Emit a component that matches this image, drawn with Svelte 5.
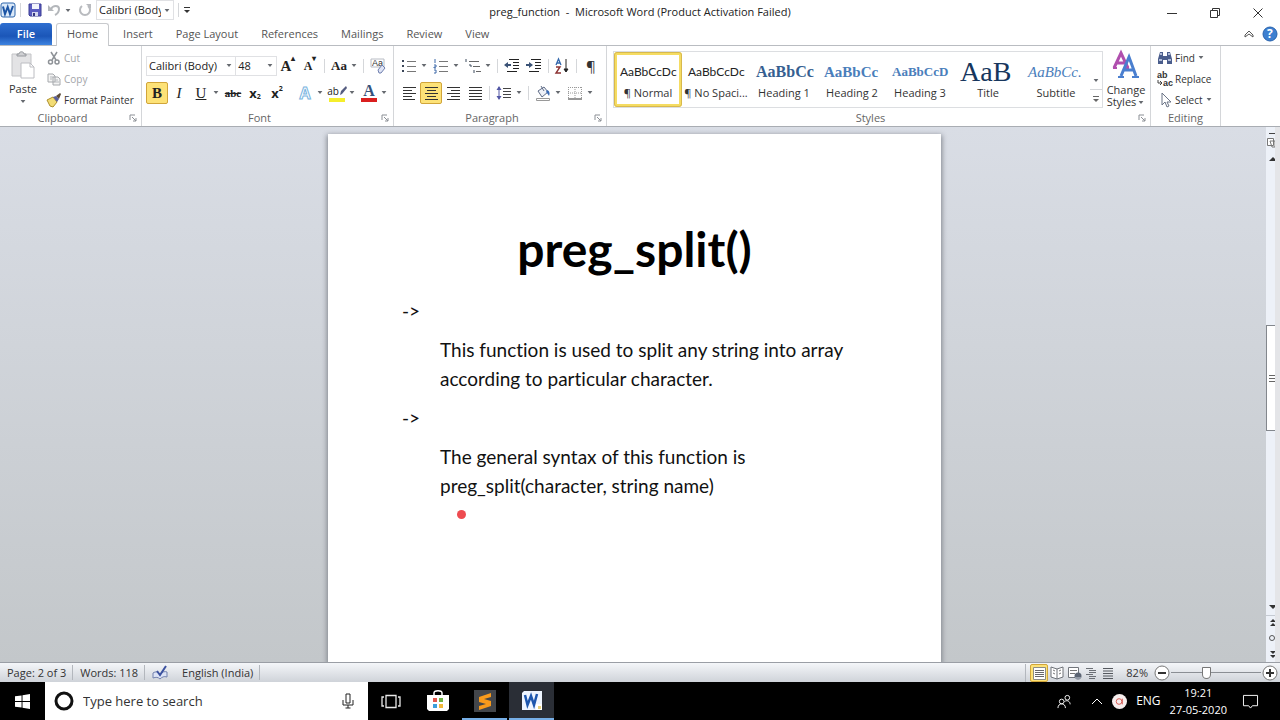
<script>
  const tabs = ['Insert', 'Page Layout', 'References', 'Mailings', 'Review', 'View'];

  const styles = [
    { name: '¶ Normal', sample: 'AaBbCcDc', kind: 'body' },
    { name: '¶ No Spaci...', sample: 'AaBbCcDc', kind: 'body' },
    { name: 'Heading 1', sample: 'AaBbCc', kind: 'h1' },
    { name: 'Heading 2', sample: 'AaBbCc', kind: 'h2' },
    { name: 'Heading 3', sample: 'AaBbCcD', kind: 'h3' },
    { name: 'Title', sample: 'AaB', kind: 'title' },
    { name: 'Subtitle', sample: 'AaBbCc.', kind: 'subtitle' }
  ];

  const icons = {
    // quick access
    word: '<rect x="1" y="1" width="14" height="14" rx="2" fill="#dbe9f8" stroke="#2f66ac"/><path d="M3 4.500l2 7.500 2.700-7 2.300 7 3-8" fill="none" stroke="#1c55a5" stroke-width="2"/>',
    save: '<path d="M2 2h12v12H3l-1-1z" fill="#5a5cc0" stroke="#3b3c94"/><path d="M5 2h7v5H5z" fill="#f2f4fc"/><path d="M5 10h6v4H5z" fill="#d5d8ee"/><path d="M6 11h2v3H6z" fill="#35367f"/>',
    undo: '<path d="M5 7c2-4 8-4 8 0 0 3-2 5-4 6" fill="none" stroke="#b4b7bb" stroke-width="2"/><path d="M2 3v6h6z" fill="#b4b7bb"/>',
    redo: '<path d="M11 4a5 5 0 1 1-6 0" fill="none" stroke="#b9bbbf" stroke-width="2"/><path d="M9 2h5v5z" fill="#b9bbbf"/>',
    // clipboard
    cut: '<path d="M5 2l5 8M11 2L6 10" stroke="#8e9297" stroke-width="1.500"/><circle cx="4.500" cy="12" r="2" fill="none" stroke="#8e9297" stroke-width="1.500"/><circle cx="11" cy="12" r="2" fill="none" stroke="#8e9297" stroke-width="1.500"/>',
    copy: '<path d="M2 3h5l2 2v6H2zM7 6h5l2 2v6H7z" fill="#f4f4f4" stroke="#a5a8ac"/><path d="M4 6h3M4 8h2M9 9h3M9 11h4" stroke="#b5b8bc"/>',
    brush: '<path d="M1 8l6-3 4 5-4 5-3-1z" fill="#f2dc75" stroke="#ae902d"/><path d="M7 5l3-1 3 3-2 3z" fill="#5a5f9c"/><path d="M10 4l4-3 1 1-2 5z" fill="#5d4b38"/>',
    // font
    clear: '<text x="2" y="8" font-size="9" font-family="Liberation Sans" fill="#333">Aa</text><path d="M1 1h13v8H1z" fill="none" stroke="#b8bcc4"/><path d="M8 12l4-5 3 3-4 5H9z" fill="#dfe4f5" stroke="#6f7fae"/>',
    // paragraph
    bullets: '<path d="M1 2h2v2H1zM1 7h2v2H1zM1 12h2v2H1z" fill="#3b4658"/><path d="M6 3.500h9M6 8.500h9M6 13.500h9" stroke="#777"/>',
    numbers: '<path d="M2 1v4M1 7h2v2H1v1h2M1 12h2v3H1" fill="none" stroke="#3d69a8"/><path d="M6 3.500h9M6 8.500h9M6 13.500h9" stroke="#777"/>',
    multi: '<path d="M1 1v3M4 7h2v2M9 12v3" fill="none" stroke="#3d4a5c"/><path d="M4 3.500h10M8 8.500h7M11 13.500h5" stroke="#666"/>',
    outdent: '<path d="M5 1.500h10M9 4.500h6M9 7.500h6M9 10.500h6M3 13.500h10" stroke="#222"/><path d="M0 7l4-3v2h3v2H4v2z" fill="#3a5276"/>',
    indent: '<path d="M5 1.500h10M9 4.500h6M9 7.500h6M9 10.500h6M3 13.500h10" stroke="#222"/><path d="M7 7L3 4v2H0v2h3v2z" fill="#3a5276"/>',
    sort: '<path d="M2 7l2.500-6L7 7M3 5h3" fill="none" stroke="#3368ad" stroke-width="1.300"/><path d="M2 9h4l-4 6h5" fill="none" stroke="#8c3232" stroke-width="1.400"/><path d="M12 1v12M10 11l2 3 2-3z" fill="#222" stroke="#222"/>',
    left: '<path d="M2 2.500h13M2 5.500h9M2 8.500h13M2 11.500h9M2 14.500h12" stroke="#333"/>',
    center: '<path d="M2 2.500h13M4 5.500h9M2 8.500h13M4 11.500h9M2 14.500h13" stroke="#333"/>',
    right: '<path d="M2 2.500h13M6 5.500h9M2 8.500h13M6 11.500h9M2 14.500h13" stroke="#333"/>',
    justify: '<path d="M2 2.500h13M2 5.500h13M2 8.500h13M2 11.500h13M2 14.500h13" stroke="#333"/>',
    spacing: '<path d="M7 3.500h8M7 6.500h8M7 9.500h8M7 12.500h8" stroke="#444"/><path d="M3 2v12" stroke="#5257a5"/><path d="M0.500 5L3 1l2.500 4zM0.500 11L3 15l2.500-4z" fill="#5257a5"/>',
    fill: '<path d="M3 6l6-4 4 5-6 5z" fill="#eef1f8" stroke="#5f6c86"/><path d="M6 1l3 5" stroke="#5f6c86"/><path d="M12 5c3 1 3 4 2 6-1-2-2-3-3-4z" fill="#3a6bb5"/><path d="M1.500 13.500h13v2h-13z" fill="#fff" stroke="#999"/>',
    borders: '<path d="M1.500 2v11M8 2v11M14.500 2v11M1 2.500h14M1 8h14" stroke="#999" stroke-dasharray="1 1"/><path d="M1 14h14" stroke="#333"/>',
    // editing
    find: '<path d="M1 14V9l2-7h3v4h4V2h3l2 7v5h-5v-4H6v4z" fill="#4a5d8c"/><path d="M2 10h3M11 10h3M3 4h2M11 4h2" stroke="#d3dcf0" stroke-width="1.300"/>',
    replace: '<text x="0" y="7" font-size="9" font-weight="bold" font-family="Liberation Sans" fill="#333">ab</text><text x="6" y="15" font-size="9" font-weight="bold" font-family="Liberation Sans" fill="#333">ac</text><path d="M1 9v3h4M3 10l2 2-2 2" fill="none" stroke="#444"/>',
    select: '<path d="M5 1v12l3-3 2 5 2-1-2-4h4z" fill="#fff" stroke="#6b7486"/>',
    // status bar
    proof: '<path d="M1 8c3-2 5-1 7 1 2-2 5-3 7-2v5c-3-1-5 0-7 2-2-2-4-2-7-1z" fill="#dce3f5" stroke="#7281ae"/><path d="M5 6l3 4 6-9" fill="none" stroke="#3c52a0" stroke-width="2"/>',
    print: '<path d="M2.500 2.500h12v12h-12z" fill="#fff" stroke="#8d8d85"/><path d="M4 5.500h9M4 7.500h9M4 9.500h9M4 11.500h9" stroke="#67676b"/>',
    reading: '<path d="M8 4L2 2v10l6 2 6-2V2zM8 4v10" fill="#fff" stroke="#6e7278"/><path d="M4 5l2 1M4 8l2 1M10 6l2-1M10 9l2-1" stroke="#777"/>',
    web: '<path d="M2.500 2.500h10v10h-10z" fill="#fff" stroke="#72767c"/><path d="M4 5.500h7M4 8.500h5" stroke="#777"/><circle cx="12" cy="11" r="3.500" fill="#5c6573"/><path d="M9 13h6" stroke="#c9d0da"/>',
    outline: '<path d="M3 3.500h7M6 5.500h7M6 7.500h7M3 9.500h7M6 11.500h7M6 13.500h6" stroke="#6b6f75"/>',
    draft: '<path d="M3 3.500h10M3 6h10M3 8.500h10M3 11h10M3 13.500h10" stroke="#55595f"/>'
  };
</script>

{#snippet icon(name)}
  <svg class="icon" viewBox="0 0 16 16" aria-hidden="true">{@html icons[name]}</svg>
{/snippet}

{#snippet arrow()}
  <svg class="arrow" viewBox="0 0 10 6" aria-hidden="true"><path d="M2 1h6L5 5z" fill="#666a70" /></svg>
{/snippet}

{#snippet tool(name, split)}
  <button class="tool" class:split aria-label={name}>
    <span class="face">{@render icon(name)}</span>
    {#if split}{@render arrow()}{/if}
  </button>
{/snippet}

{#snippet launcher()}
  <button class="launcher" aria-label="More options">
    <svg viewBox="0 0 8 8"><path d="M1 6V1h5M3 3l4 4M7 4v3H4" fill="none" stroke="#8b8f95" /></svg>
  </button>
{/snippet}

<div class="window">
  <header class="titlebar">
    <div class="quick">
      {@render icon('word')}
      <i class="bar"></i>
      <button class="tool" aria-label="Save">{@render icon('save')}</button>
      <button class="tool split" aria-label="Undo">{@render icon('undo')}{@render arrow()}</button>
      <button class="tool" aria-label="Redo">{@render icon('redo')}</button>
      <span class="combo quickfont">
        <select aria-label="Quick font"><option>Calibri (Body)</option></select>
        {@render arrow()}
      </span>
      <i class="bar"></i>
      <button class="more" aria-label="Customize toolbar">
        <svg viewBox="0 0 8 8"><path d="M1 1.500h6" stroke="#333" /><path d="M1 4h6L4 7z" fill="#333" /></svg>
      </button>
    </div>
    <h1>preg_function&nbsp; -&nbsp; Microsoft Word (Product Activation Failed)</h1>
    <div class="controls">
      <button aria-label="Minimize"><svg viewBox="0 0 10 10"><path d="M0 5.500h10" /></svg></button>
      <button aria-label="Restore"><svg viewBox="0 0 10 10"><path d="M0.500 2.500h7v7h-7zM2.500 2V0.500h7v7H8" /></svg></button>
      <button aria-label="Close"><svg viewBox="0 0 10 10"><path d="M0.500 0.500l9 9M9.500 0.500l-9 9" /></svg></button>
    </div>
  </header>

  <nav class="tabs">
    <button class="file">File</button>
    <button class="tab current">Home</button>
    {#each tabs as tab}
      <button class="tab">{tab}</button>
    {/each}
    <div class="help">
      <button aria-label="Collapse ribbon">
        <svg class="chev" viewBox="0 0 10 10"><path d="M1 6l4-4 4 4v2L5 5 1 8z" fill="#fff" stroke="#555" /></svg>
      </button>
      <button aria-label="Help">
        <svg class="ball" viewBox="0 0 16 16"><circle cx="8" cy="8" r="7" fill="#3d7fd0" stroke="#2862ac" /><text x="5" y="12" font-size="12" font-weight="bold" font-family="Open Sans" fill="#fff">?</text></svg>
      </button>
    </div>
  </nav>

  <div class="ribbon">
    <section class="group clipboard">
      <div class="body">
        <button class="big paste">
          <svg viewBox="0 0 26 28" aria-hidden="true">
            <path d="M2 3h19v22H2z" fill="#e3e3e5" stroke="#c3c4c7" />
            <path d="M7 5V3h2c0-3 5-3 5 0h2v2z" fill="#cfd0d3" stroke="#96999e" />
            <path d="M11 12h9l4 4v11H11z" fill="#fff" stroke="#bcbdc2" />
            <path d="M20 12v4h4" fill="none" stroke="#bcbdc2" />
          </svg>
          <span>Paste</span>
          {@render arrow()}
        </button>
        <div class="stack">
          <button class="line off">{@render icon('cut')}Cut</button>
          <button class="line off">{@render icon('copy')}Copy</button>
          <button class="line">{@render icon('brush')}Format Painter</button>
        </div>
      </div>
      <footer><span>Clipboard</span>{@render launcher()}</footer>
    </section>

    <section class="group font">
      <div class="rows">
        <div class="row">
          <span class="combo family">
            <select aria-label="Font"><option>Calibri (Body)</option></select>
            {@render arrow()}
          </span>
          <span class="combo size">
            <select aria-label="Font size"><option>48</option></select>
            {@render arrow()}
          </span>
          <button class="tool serif" aria-label="Grow font">A<sup>▴</sup></button>
          <button class="tool serif small" aria-label="Shrink font">A<sup>▾</sup></button>
          <i class="bar"></i>
          <button class="tool split serif" aria-label="Change case"><span class="face case">Aa</span>{@render arrow()}</button>
          <i class="bar"></i>
          {@render tool('clear')}
        </div>
        <div class="row">
          <button class="tool serif on"><b>B</b></button>
          <button class="tool serif"><em>I</em></button>
          <button class="tool split serif"><span class="face"><u>U</u></span>{@render arrow()}</button>
          <button class="tool serif strike"><s>abc</s></button>
          <button class="tool script">x<sub>2</sub></button>
          <button class="tool script">x<sup>2</sup></button>
          <i class="bar"></i>
          <button class="tool split"><span class="face glow">A</span>{@render arrow()}</button>
          <button class="tool split"><span class="face ink marker">ab
            <svg viewBox="0 0 8 10"><path d="M1 9l1-4 5-5 1 2-5 6z" fill="#555c80" /></svg></span>{@render arrow()}</button>
          <button class="tool split"><span class="face ink red">A</span>{@render arrow()}</button>
        </div>
      </div>
      <footer><span>Font</span>{@render launcher()}</footer>
    </section>

    <section class="group paragraph">
      <div class="rows">
        <div class="row">
          {@render tool('bullets', true)}
          {@render tool('numbers', true)}
          {@render tool('multi', true)}
          <i class="bar"></i>
          {@render tool('outdent')}
          {@render tool('indent')}
          <i class="bar"></i>
          {@render tool('sort')}
          <i class="bar"></i>
          <button class="tool pilcrow">¶</button>
        </div>
        <div class="row">
          {@render tool('left')}
          <button class="tool on" aria-label="center">{@render icon('center')}</button>
          {@render tool('right')}
          {@render tool('justify')}
          <i class="bar"></i>
          {@render tool('spacing', true)}
          <i class="bar"></i>
          {@render tool('fill', true)}
          {@render tool('borders', true)}
        </div>
      </div>
      <footer><span>Paragraph</span>{@render launcher()}</footer>
    </section>

    <section class="group styles">
      <div class="body">
        <div class="gallery">
          {#each styles as style, i}
            <button class="style" class:chosen={i === 0}>
              <span class="sample {style.kind}">{style.sample}</span>
              <span class="name">{style.name}</span>
            </button>
          {/each}
          <div class="scroll">
            <button aria-label="Next styles">{@render arrow()}</button>
            <button class="last" aria-label="All styles">
              <svg viewBox="0 0 8 8"><path d="M1 1.500h6" stroke="#666" /><path d="M1 4h6L4 7z" fill="#666" /></svg>
            </button>
          </div>
        </div>
        <button class="big change">
          <svg class="letters" viewBox="0 0 28 28" aria-hidden="true">
            <path d="M2 17L9 2l7 15M5 12h8" fill="none" stroke="#b04fae" stroke-width="3" />
            <path d="M1 17h4M13 17h4" stroke="#b04fae" stroke-width="2" />
            <path d="M9 25L17 6l7 19M12 19h10" fill="none" stroke="#4a7fcf" stroke-width="3" />
            <path d="M6 26h6M20 26h7" stroke="#4a7fcf" stroke-width="2" />
          </svg>
          <span>Change</span>
          <span class="second">Styles{@render arrow()}</span>
        </button>
      </div>
      <footer><span>Styles</span>{@render launcher()}</footer>
    </section>

    <section class="group editing">
      <div class="stack">
        <button class="line">{@render icon('find')}Find {@render arrow()}</button>
        <button class="line">{@render icon('replace')}Replace</button>
        <button class="line">{@render icon('select')}Select {@render arrow()}</button>
      </div>
      <footer><span>Editing</span></footer>
    </section>
  </div>

  <main class="workspace">
    <div class="desk">
      <article class="page">
        <h2>preg_split()</h2>
        <p>-&gt;</p>
        <p class="inner">This function is used to split any string into array according to particular character.</p>
        <p>-&gt;</p>
        <p class="inner">The general syntax of this function is preg_split(character, string name)</p>
        <i class="pointer"></i>
      </article>
    </div>
    <div class="scrollbar">
      <svg class="ruler" viewBox="0 0 9 30"><path d="M3 1.500h6" stroke="#444" /><path d="M1.500 6.500h6v7h-6zM4 9h5v6H6z" fill="#fff" stroke="#777" /><path d="M3 29l4-4 4 4z" fill="#333" /></svg>
      <div class="track">
        <div class="thumb"><i></i><i></i><i></i></div>
      </div>
      <svg class="browse" viewBox="0 0 9 60"><path d="M3 3l4 4 4-4z" fill="#333" /><path d="M0 13.500h9" stroke="#c5cad2" /><path d="M4 20l3-3 3 3zM4 24l3-3 3 3z" fill="#333" /><circle cx="6" cy="36" r="2.500" fill="none" stroke="#555" /><path d="M4 49l3 3 3-3zM4 53l3 3 3-3z" fill="#333" /></svg>
    </div>
    <div class="edge"></div>
  </main>

  <footer class="status">
    <span class="cell">Page: 2 of 3</span>
    <span class="cell">Words: 118</span>
    <span class="cell lang">{@render icon('proof')}<span>English (India)</span></span>
    <div class="views">
      <button class="tool on" aria-label="Print layout">{@render icon('print')}</button>
      {#each ['reading', 'web', 'outline', 'draft'] as view}
        <button class="view" aria-label={view}>{@render icon(view)}</button>
      {/each}
      <span class="percent">82%</span>
      <button class="round" aria-label="Zoom out"><svg viewBox="0 0 16 16"><circle cx="8" cy="8" r="7" fill="#fff" stroke="#777" /><path d="M4 8h8" stroke="#333" stroke-width="2" /></svg></button>
      <input type="range" min="10" max="200" value="82" aria-label="Zoom" />
      <button class="round" aria-label="Zoom in"><svg viewBox="0 0 16 16"><circle cx="8" cy="8" r="7" fill="#fff" stroke="#777" /><path d="M4 8h8M8 4v8" stroke="#333" stroke-width="2" /></svg></button>
    </div>
  </footer>

  <div class="taskbar">
    <button class="start" aria-label="Start">
      <svg viewBox="0 0 16 16"><path d="M0 2.500l7-1v6H0zM8 1.300L16 0v7.500H8zM0 8.500h7v6l-7-1zM8 8.500h8V16l-8-1.300z" fill="#fff" /></svg>
    </button>
    <label class="search">
      <svg class="ring" viewBox="0 0 20 20"><circle cx="10" cy="10" r="8" fill="none" stroke="#111" stroke-width="3" /></svg>
      <input type="text" placeholder="Type here to search" aria-label="Search" />
      <svg class="mic" viewBox="0 0 12 16"><path d="M4 1h4v9H4zM1 7v5h10V7M6 12v3M3.500 15h5" fill="none" stroke="#222" /></svg>
    </label>
    <button class="app" aria-label="Task view">
      <svg viewBox="0 0 22 22"><path d="M6 5.500h10v12H6zM4 7H2v9h2M18 7h2v9h-2" fill="none" stroke="#e8e8e8" stroke-width="1.300" /></svg>
    </button>
    <button class="app" aria-label="Store">
      <svg viewBox="0 0 22 22"><path d="M7 6V3c0-3 8-3 8 0v3" fill="none" stroke="#fff" stroke-width="1.500" /><path d="M0 5h22v14l-2 2H2l-2-2z" fill="#fff" /><path d="M6 8h4v4H6z" fill="#e2574c" /><path d="M12 8h4v4h-4z" fill="#6fb344" /><path d="M6 14h4v4H6z" fill="#3ba0dc" /><path d="M12 14h4v4h-4z" fill="#f2b93b" /></svg>
    </button>
    <button class="app running" aria-label="Sublime Text">
      <svg viewBox="0 0 22 22"><path d="M0 0h22v22H0z" fill="#43464b" /><path d="M17 3v4l-7 2 7 2v5L5 20v-4l7-2-7-2V7z" fill="#f89a1c" /></svg>
    </button>
    <button class="app running front" aria-label="Word">
      <svg viewBox="0 0 22 22"><path d="M3 1h18v19H1V3z" fill="#eef5ff" /><path d="M4 5l2.500 10L10 6l3 9 3-11" fill="none" stroke="#1d56ad" stroke-width="2.500" /><path d="M15 14h6v6h-6z" fill="#fff" /><path d="M17 16h3v3h-3z" fill="#e8d27a" /></svg>
    </button>
    <div class="tray">
      <svg class="people" viewBox="0 0 16 16"><circle cx="5" cy="8" r="2.500" /><circle cx="11" cy="4" r="2.500" /><path d="M1 15c0-6 8-6 8 0M8 8c3-2 6 0 6 3" /></svg>
      <svg class="up" viewBox="0 0 12 8"><path d="M1 7l5-5 5 5" /></svg>
      <svg class="dot" viewBox="0 0 16 16"><circle cx="8" cy="8" r="8" fill="#f7eeee" stroke="none" /><circle cx="7.500" cy="8" r="3" stroke="#d4554f" /><path d="M11 5v6" stroke="#d4554f" /></svg>
      <span>ENG</span>
      <time><span>19:21</span><span>27-05-2020</span></time>
      <svg class="note" viewBox="0 0 16 16"><path d="M0.500 1.500h15v11H10L8 15l-2-2.500H0.500z" /></svg>
    </div>
  </div>
</div>

<style>
  :global(body) {
    margin: 0;
  }

  .window {
    display: flex;
    flex-direction: column;
    height: 100vh;
    overflow: hidden;
    background: #fff;
    color: #333;
    font-family: "Open Sans", "Noto Sans", sans-serif;
    font-size: 11px;
    line-height: 14px;
  }

  button,
  select,
  input {
    margin: 0;
    padding: 0;
    border: 0;
    background: none;
    color: inherit;
    font: inherit;
  }

  button {
    display: flex;
    align-items: center;
    justify-content: center;
    flex-shrink: 0;
    white-space: nowrap;
  }

  h1, h2, p {
    margin: 0;
  }

  svg {
    flex-shrink: 0;
    overflow: visible;
  }

  .icon {
    width: 16px;
    height: 16px;
  }

  .arrow {
    width: 8px;
    height: 5px;
  }

  .bar {
    width: 1px;
    height: 14px;
    margin: 0 3px;
    background: #d5d7da;
  }

  /* title bar */
  .titlebar {
    display: grid;
    grid-template-columns: 1fr auto 1fr;
    height: 23px;
  }

  .quick {
    display: flex;
    align-items: center;
    height: 20px;
    gap: 1px;
  }

  .quick .tool {
    width: 20px;
  }

  .quick .split {
    width: 28px;
    gap: 2px;
  }

  .combo {
    display: grid;
    align-items: center;
    height: 20px;
    box-sizing: border-box;
    border: 1px solid #e0e1e4;
  }

  .combo select {
    grid-area: 1 / 1;
    width: 100%;
    padding-left: 2px;
    appearance: none;
    outline: none;
    color: #222;
  }

  .combo .arrow {
    grid-area: 1 / 1;
    justify-self: end;
    margin-right: 2px;
  }

  .quickfont {
    width: 78px;
  }

  .quickfont select {
    width: 64px;
  }

  .more svg,
  .last svg {
    width: 8px;
    height: 8px;
  }

  h1 {
    padding-top: 5px;
    font-size: 11px;
    font-weight: 400;
    color: #222;
  }

  .controls {
    display: flex;
    justify-content: flex-end;
    padding-right: 1px;
  }

  .controls button {
    width: 43px;
    height: 26px;
  }

  .controls svg {
    width: 10px;
    height: 10px;
    fill: none;
    stroke: #333;
  }

  /* tabs */
  .tabs {
    display: flex;
    height: 22px;
    border-bottom: 1px solid #b9bcc1;
    color: #555;
  }

  .file {
    width: 52px;
    margin-right: 4px;
    border-radius: 3px 3px 0 0;
    background: linear-gradient(#2f6fd0, #1b56b8 60%, #3d83e0);
    color: #fff;
    font-weight: 600;
  }

  .tab {
    padding: 0 11px 0 12px;
  }

  .current {
    height: 23px;
    margin-right: 2px;
    padding: 0 10px 2px;
    box-sizing: border-box;
    border: 1px solid #c8cacd;
    border-bottom: 0;
    border-radius: 3px 3px 0 0;
    background: #fff;
  }

  .help {
    display: flex;
    gap: 8px;
    margin-left: auto;
    padding-right: 2px;
  }

  .chev {
    width: 10px;
    height: 10px;
  }

  .ball {
    width: 16px;
    height: 16px;
  }

  /* ribbon */
  .ribbon {
    display: flex;
    height: 80px;
    border-bottom: 1px solid #a9adb3;
  }

  .group {
    display: flex;
    flex-direction: column;
    flex-shrink: 0;
    box-sizing: border-box;
    border-right: 1px solid #d4d6d9;
  }

  .group footer {
    display: flex;
    align-items: center;
    height: 16px;
    margin-top: auto;
    color: #666;
  }

  .group footer span {
    flex: 1;
    text-align: center;
  }

  .launcher {
    width: 16px;
  }

  .launcher svg {
    width: 8px;
    height: 8px;
  }

  .body {
    display: flex;
  }

  .clipboard {
    width: 142px;
  }

  .font {
    width: 252px;
  }

  .paragraph {
    width: 213px;
  }

  .styles {
    width: 544px;
  }

  .editing {
    width: 70px;
  }

  .big {
    flex-direction: column;
    justify-content: flex-start;
    padding-top: 5px;
  }

  .paste {
    width: 46px;
    gap: 3px;
  }

  .paste svg:first-child {
    width: 26px;
    height: 28px;
  }

  .stack {
    display: flex;
    flex-direction: column;
    padding-top: 1px;
  }

  .line {
    justify-content: flex-start;
    gap: 2px;
    height: 21px;
    font-size: 10px;
  }

  .off {
    color: #a3a5a9;
  }

  .editing .stack {
    padding-left: 6px;
  }

  .rows {
    padding: 6px 4px 0;
  }

  .row {
    display: flex;
    align-items: center;
    height: 27px;
  }

  .family {
    width: 91px;
  }

  .size {
    width: 41px;
    border-left: 0;
  }

  .tool {
    width: 22px;
    height: 22px;
    box-sizing: border-box;
  }

  .split {
    width: 32px;
    justify-content: flex-start;
  }

  .face {
    display: flex;
    align-items: center;
    justify-content: center;
    width: 22px;
  }

  .on {
    border: 1px solid #d1a53a;
    border-radius: 2px;
    background: #fde277;
  }

  .serif {
    font-family: "Liberation Serif", serif;
    font-size: 15px;
    font-weight: 700;
    color: #222;
  }

  .serif em,
  .serif u {
    font-weight: 400;
  }

  .serif sup {
    align-self: flex-start;
    font-size: 8px;
    line-height: 8px;
  }

  .case {
    font-size: 13px;
  }

  .small {
    font-size: 12px;
  }

  .strike {
    font-size: 11px;
  }

  .script {
    font-size: 13px;
    font-weight: 700;
    color: #222;
  }

  .script sub,
  .script sup {
    font-size: 7px;
    line-height: 8px;
  }

  .script sub {
    padding-top: 8px;
  }

  .script sup {
    padding-bottom: 8px;
  }

  .glow {
    color: #fff;
    font-size: 16px;
    font-weight: 700;
    -webkit-text-stroke: 1px #79b4e0;
  }

  .ink {
    width: 16px;
    margin: 0 3px;
    height: 15px;
    border-bottom: 4px solid #f5ee2c;
    color: #222;
  }

  .marker svg {
    width: 8px;
    height: 10px;
  }

  .marker {
    font-size: 10px;
  }

  .red {
    border-color: #da1f1f;
    color: #36527c;
    font-family: "Liberation Serif", serif;
    font-size: 16px;
    font-weight: 700;
  }

  .pilcrow {
    font-size: 15px;
    color: #333;
  }

  /* style gallery */
  .gallery {
    display: flex;
    height: 55px;
    margin: 5px 0 0 6px;
    border: 1px solid #dcdee1;
    border-right: 0;
  }

  .style {
    flex-direction: column;
    justify-content: flex-end;
    width: 68px;
    padding: 0 4px 7px;
    box-sizing: border-box;
  }

  .chosen {
    border: 3px solid #f5dc62;
    border-radius: 3px;
    outline: 1px solid #d8b94d;
    outline-offset: -1px;
    padding: 0 1px 4px;
  }

  .sample {
    display: flex;
    align-items: center;
    width: 60px;
    height: 28px;
    padding-left: 2px;
    box-sizing: border-box;
    font-family: "Liberation Serif", serif;
    line-height: 28px;
    color: #4a7ebb;
  }

  .sample.body {
    font-family: Lato, sans-serif;
    font-size: 12px;
    color: #222;
  }

  .sample.h1 {
    font-size: 16px;
    font-weight: 700;
    color: #365f91;
  }

  .h2 {
    font-size: 15px;
    font-weight: 700;
  }

  .h3 {
    font-size: 13px;
    font-weight: 700;
  }

  .sample.title {
    font-size: 28px;
    color: #17365d;
  }

  .subtitle {
    font-size: 15px;
    font-style: italic;
  }

  .scroll {
    display: flex;
    flex-direction: column;
    justify-content: flex-end;
    width: 12px;
    border-right: 1px solid #dcdee1;
  }

  .scroll button {
    height: 18px;
  }

  .scroll .last {
    border-top: 1px solid #d5d7da;
  }

  .change {
    width: 46px;
  }

  .letters {
    width: 28px;
    height: 28px;
    margin-bottom: 5px;
  }

  .change span {
    line-height: 12px;
  }

  .second {
    display: flex;
    align-items: center;
    gap: 1px;
  }

  /* document */
  .workspace {
    display: flex;
    flex: 1;
    min-height: 0;
    background: linear-gradient(#d9dde5, #c3c7ca);
  }

  .desk {
    display: flex;
    flex: 1;
    justify-content: center;
    padding: 7px 0 0 3px;
    overflow: hidden;
  }

  .page {
    position: relative;
    width: 613px;
    padding: 87px 74px 0;
    box-sizing: border-box;
    background: #fff;
    box-shadow: 0 2px 5px 1px #80858d;
    color: #111;
    font-family: Lato, sans-serif;
    font-size: 19px;
    font-variant-ligatures: none;
    line-height: 29px;
  }

  h2 {
    margin-bottom: 19px;
    color: #000;
    font-size: 48px;
    line-height: 56px;
    text-align: center;
  }

  .page p {
    margin-bottom: 10px;
  }

  .page .inner {
    padding-left: 38px;
  }

  .pointer {
    position: absolute;
    top: 376px;
    left: 129px;
    width: 9px;
    height: 9px;
    border-radius: 50%;
    background: #ee4b50;
  }

  .scrollbar {
    display: flex;
    flex-direction: column;
    width: 9px;
    background: #edf1f8;
    overflow: hidden;
  }

  .ruler {
    width: 9px;
    height: 30px;
    margin-top: 5px;
  }

  .track {
    display: flex;
    flex: 1;
    flex-direction: column;
    padding-top: 163px;
  }

  .thumb {
    display: flex;
    flex-direction: column;
    align-items: flex-end;
    justify-content: center;
    gap: 2px;
    height: 104px;
    border: 1px solid #83878d;
    border-right: 0;
    background: #fff;
  }

  .thumb i {
    width: 6px;
    height: 1px;
    background: #666;
  }

  .browse {
    width: 9px;
    height: 60px;
  }

  .edge {
    width: 5px;
    background: #e4e5e8;
  }

  /* status bar */
  .status {
    display: flex;
    align-items: center;
    height: 19px;
    border-top: 1px solid #9a9ea5;
    background: linear-gradient(#f4f6f9, #cfd3d9);
  }

  .cell {
    display: flex;
    align-items: center;
    height: 15px;
    padding: 0 6px 0 7px;
    border-right: 1px solid #b3b7bd;
  }

  .lang {
    gap: 14px;
  }

  .views {
    display: flex;
    align-items: center;
    gap: 1px;
    margin-left: auto;
    padding: 0 2px 0 4px;
    border-left: 1px solid #b3b7bd;
  }

  .views .on {
    width: 18px;
    height: 18px;
  }

  .percent {
    padding: 0 5px 0 9px;
  }

  .round svg {
    width: 16px;
    height: 16px;
  }

  .round {
    width: 16px;
  }

  input[type='range'] {
    width: 90px;
    height: 16px;
    appearance: none;
    background: linear-gradient(#8a8e94, #8a8e94) center / 100% 1px no-repeat;
  }

  input[type='range']::-webkit-slider-thumb {
    appearance: none;
    width: 9px;
    height: 12px;
    border: 1px solid #777;
    border-radius: 1px 1px 5px 5px;
    background: #fff;
  }

  /* taskbar */
  .taskbar {
    display: flex;
    height: 38px;
    background: #000;
    color: #fff;
  }

  .start {
    width: 45px;
  }

  .start svg {
    width: 15px;
    height: 15px;
  }

  .search {
    display: flex;
    align-items: center;
    gap: 9px;
    width: 323px;
    padding: 0 14px 0 9px;
    box-sizing: border-box;
    background: #fff;
  }

  .search input {
    flex: 1;
    min-width: 0;
    color: #333;
    font-size: 13px;
    line-height: 20px;
  }

  .search input::placeholder {
    color: #333;
    opacity: 1;
  }

  .ring {
    width: 20px;
    height: 20px;
  }

  .mic {
    width: 12px;
    height: 16px;
  }

  .app {
    width: 45px;
    margin-right: 2px;
    box-sizing: border-box;
    border-top: 2px solid transparent;
    border-bottom: 2px solid transparent;
  }

  .app svg {
    width: 22px;
    height: 22px;
  }

  .running {
    border-bottom-color: #76aee6;
  }

  .front {
    background: #2a2e36;
    border-top-color: #2a2e36;
  }

  .tray {
    display: flex;
    align-items: center;
    gap: 9px;
    margin-left: auto;
    padding-right: 22px;
    font-size: 12px;
  }

  .tray svg {
    width: 15px;
    height: 15px;
    fill: none;
    stroke: #fff;
  }

  .tray .people {
    margin-right: 10px;
  }

  .tray .up {
    width: 12px;
    height: 8px;
  }

  .tray .note {
    margin-left: 7px;
  }

  time {
    display: flex;
    flex-direction: column;
    align-items: center;
    font-size: 11px;
    line-height: 17px;
  }
</style>
